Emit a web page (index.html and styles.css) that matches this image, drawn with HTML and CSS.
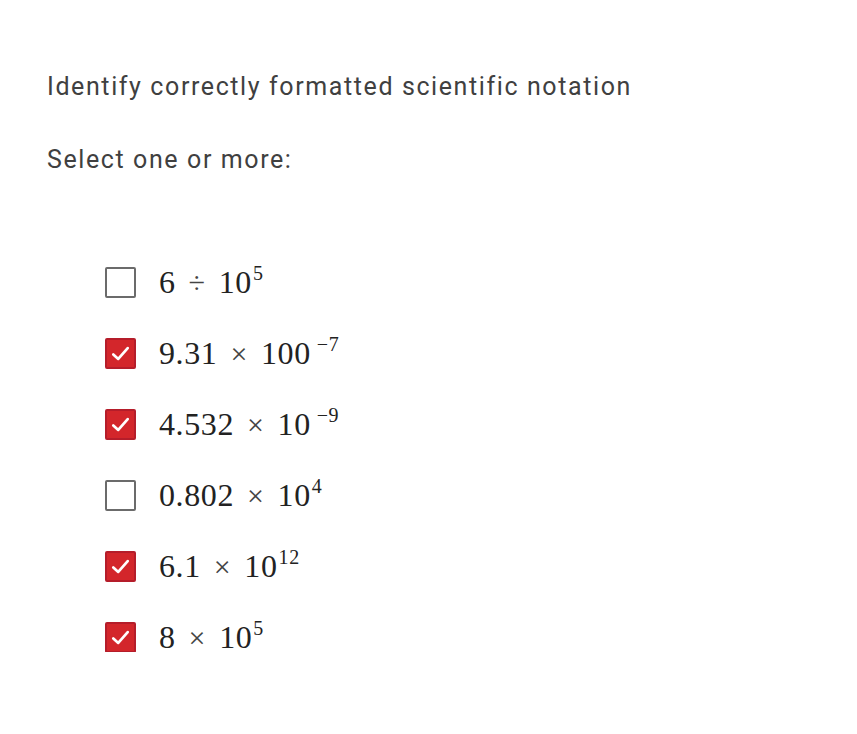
FILE: index.html
```html
<!DOCTYPE html>
<html>
<head>
<meta charset="utf-8">
<link rel="stylesheet" href="styles.css">
</head>
<body>
<div class="page">
  <p class="question">Identify correctly formatted scientific notation</p>
  <p class="prompt">Select one or more:</p>
  <ul class="options">
    <li class="option"><span class="box"></span><span class="math">6<span class="op">÷</span>10<sup>5</sup></span></li>
    <li class="option"><span class="box checked"><svg viewBox="0 0 30 30"><path d="M7 16 L12.5 21 L23 9" /></svg></span><span class="math">9.31<span class="op">×</span>100<sup class="neg">−7</sup></span></li>
    <li class="option"><span class="box checked"><svg viewBox="0 0 30 30"><path d="M7 16 L12.5 21 L23 9" /></svg></span><span class="math">4.532<span class="op">×</span>10<sup class="neg">−9</sup></span></li>
    <li class="option"><span class="box"></span><span class="math">0.802<span class="op">×</span>10<sup>4</sup></span></li>
    <li class="option"><span class="box checked"><svg viewBox="0 0 30 30"><path d="M7 16 L12.5 21 L23 9" /></svg></span><span class="math">6.1<span class="op">×</span>10<sup>12</sup></span></li>
    <li class="option"><span class="box checked"><svg viewBox="0 0 30 30"><path d="M7 16 L12.5 21 L23 9" /></svg></span><span class="math">8<span class="op">×</span>10<sup>5</sup></span></li>
  </ul>
</div>
</body>
</html>
```
FILE: styles.css
```css
html, body {
  margin: 0;
  padding: 0;
  background: #ffffff;
}
.page {
  padding: 72px 0 0 47px;
  font-family: Roboto, "Liberation Sans", sans-serif;
  color: #404040;
}
.question {
  margin: 0;
  font-size: 25px;
  letter-spacing: 1.6px;
  line-height: 30px;
}
.prompt {
  margin: 43px 0 0 0;
  font-size: 25px;
  letter-spacing: 1.6px;
  line-height: 30px;
}
.options {
  list-style: none;
  margin: 92px 0 0 0;
  padding: 0 0 0 58px;
  display: flex;
  flex-direction: column;
  gap: 41px;
}
.option {
  display: flex;
  align-items: center;
  gap: 23px;
  height: 30px;
}
.box {
  width: 31px;
  height: 31px;
  box-sizing: border-box;
  border: 2px solid #6b6b6b;
  border-radius: 2px;
  background: #fff;
  display: flex;
  flex-shrink: 0;
}
.box.checked {
  background: #d3262b;
  border-color: #b51d2a;
}
.box svg {
  width: 27px;
  height: 27px;
}
.box svg path {
  fill: none;
  stroke: #ffffff;
  stroke-width: 3;
  stroke-linecap: round;
  stroke-linejoin: round;
}
.math {
  font-family: "Liberation Serif", "DejaVu Serif", serif;
  font-size: 32px;
  letter-spacing: 0.6px;
  color: #222;
  white-space: nowrap;
  line-height: 30px;
}
.op {
  display: inline-block;
  color: #444;
  font-size: 30px;
  margin: 0 13px 0 13px;
}
.math sup {
  font-size: 20px;
  vertical-align: 13px;
  line-height: 0;
  margin-left: 1px;
}
.math sup.neg {
  margin-left: 6px;
}
```
